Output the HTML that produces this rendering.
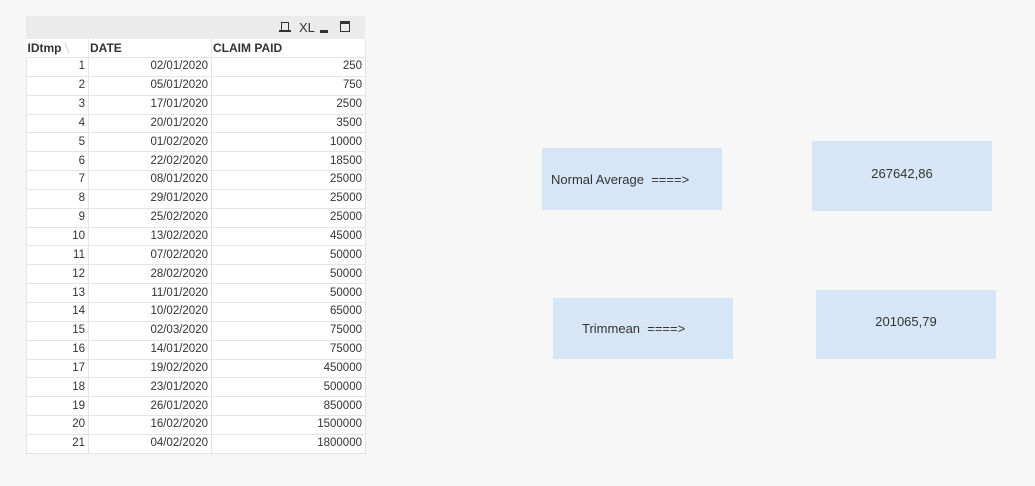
<!DOCTYPE html><html><head><style>
body{margin:0;width:1035px;height:486px;background:#f7f7f8;font-family:"Liberation Sans",sans-serif;position:relative;overflow:hidden}
.tb{position:absolute;left:26px;top:16px;width:339px;background:#fff}
.cap{height:23px;background:#ebebeb;position:relative}
table{border-collapse:collapse;width:339px;font-size:11.5px;color:#333;table-layout:fixed}
td{border:1px solid #e4e4e4;height:17.85px;padding:0 3px;text-align:right;line-height:17px;white-space:nowrap}
th{height:18px;text-align:left;font-weight:bold;font-size:12px;color:#333;background:#fff;padding:0 1px;border-right:1px solid #e8e8e8}
.box{position:absolute;background:#d6e6f6;font-size:13px;color:#333;display:flex;align-items:center;justify-content:center}
</style></head><body>
<div class="tb">
<div class="cap"><span style="position:absolute;left:255px;top:6px;width:8px;height:9px;border:1px solid #333;box-sizing:border-box"></span><span style="position:absolute;left:253px;top:14px;width:12px;height:2px;background:#333"></span><span style="position:absolute;left:273px;top:4px;font-size:13px;color:#333">XL</span><span style="position:absolute;left:294px;top:14px;width:8px;height:3px;background:#333"></span><span style="position:absolute;left:314px;top:5px;width:10px;height:11px;border:1.5px solid #333;border-top-width:3px;box-sizing:border-box"></span></div>
<table><colgroup><col style="width:62px"><col style="width:123px"><col style="width:154px"></colgroup>
<tr><th>IDtmp <span style="color:#bbb;font-weight:normal">&#x29F9;</span></th><th>DATE</th><th>CLAIM PAID</th></tr>
<tr><td>1</td><td>02/01/2020</td><td>250</td></tr>
<tr><td>2</td><td>05/01/2020</td><td>750</td></tr>
<tr><td>3</td><td>17/01/2020</td><td>2500</td></tr>
<tr><td>4</td><td>20/01/2020</td><td>3500</td></tr>
<tr><td>5</td><td>01/02/2020</td><td>10000</td></tr>
<tr><td>6</td><td>22/02/2020</td><td>18500</td></tr>
<tr><td>7</td><td>08/01/2020</td><td>25000</td></tr>
<tr><td>8</td><td>29/01/2020</td><td>25000</td></tr>
<tr><td>9</td><td>25/02/2020</td><td>25000</td></tr>
<tr><td>10</td><td>13/02/2020</td><td>45000</td></tr>
<tr><td>11</td><td>07/02/2020</td><td>50000</td></tr>
<tr><td>12</td><td>28/02/2020</td><td>50000</td></tr>
<tr><td>13</td><td>11/01/2020</td><td>50000</td></tr>
<tr><td>14</td><td>10/02/2020</td><td>65000</td></tr>
<tr><td>15</td><td>02/03/2020</td><td>75000</td></tr>
<tr><td>16</td><td>14/01/2020</td><td>75000</td></tr>
<tr><td>17</td><td>19/02/2020</td><td>450000</td></tr>
<tr><td>18</td><td>23/01/2020</td><td>500000</td></tr>
<tr><td>19</td><td>26/01/2020</td><td>850000</td></tr>
<tr><td>20</td><td>16/02/2020</td><td>1500000</td></tr>
<tr><td>21</td><td>04/02/2020</td><td>1800000</td></tr>
</table></div>
<div class="box" style="left:542px;top:148px;width:180px;height:62px;justify-content:flex-start;padding-left:9px;box-sizing:border-box">Normal Average &nbsp;====&gt;</div>
<div class="box" style="left:812px;top:141px;width:180px;height:70px;padding-bottom:6px;box-sizing:border-box">267642,86</div>
<div class="box" style="left:553px;top:298px;width:180px;height:61px;justify-content:flex-start;padding-left:29px;box-sizing:border-box">Trimmean &nbsp;====&gt;</div>
<div class="box" style="left:816px;top:290px;width:180px;height:69px;padding-bottom:6px;box-sizing:border-box">201065,79</div>
</body></html>
